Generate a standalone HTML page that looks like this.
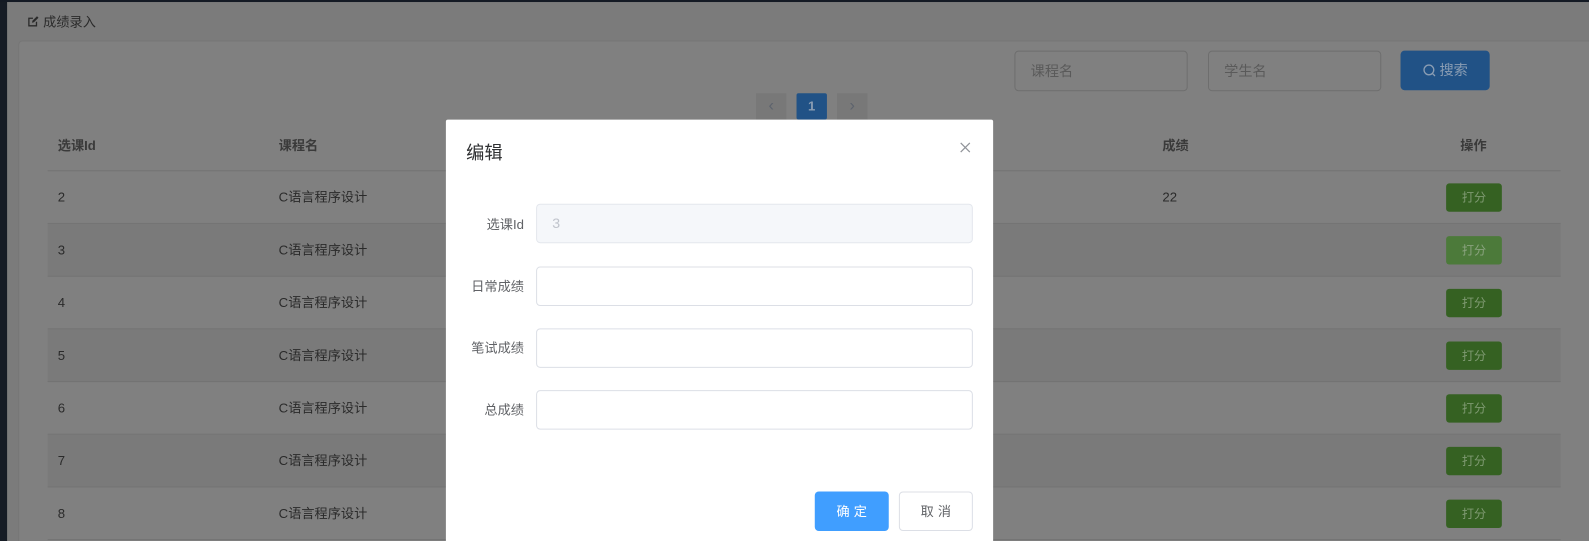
<!DOCTYPE html>
<html><head><meta charset="utf-8"><style>
*{box-sizing:border-box;margin:0;padding:0}
html,body{width:1589px;height:541px;overflow:hidden;background:#7b7b7b}
body{font-family:"Liberation Sans","Noto Sans CJK SC",sans-serif;font-size:13px;color:#333;position:relative}
#w{position:absolute;left:0;top:0;width:1568px;height:534px;transform:scale(1.0134);transform-origin:0 0}
.abs{position:absolute}
.topbar{left:0;top:0;width:1568px;height:2px;background:#141a24}
.side{left:0;top:0;width:7px;height:534px;background:#161c25}
.title{left:27px;top:14px;font-size:13px;color:#2a2a2a;line-height:16px}
.card{left:18px;top:40px;width:1570px;height:520px;background:#808080;border:1px solid #767676;border-radius:4px}
.inp{height:40px;border:1px solid #6e6e6e;border-radius:4px;color:#5a5a5a;font-size:14px;padding:0 15px;line-height:38px}
.btn{border-radius:4px;text-align:center}
.row{left:47px;width:1493px;height:52px;border-bottom:1px solid #737373}
.cell{position:absolute;font-size:13px;color:#2a2a2a;line-height:16px;top:18px}
.g{position:absolute;left:1380px;width:55px;height:28px;background:#356122;border-radius:3px;color:#7f9a72;font-size:12px;text-align:center;line-height:28px;top:12px}
.dlg{left:440px;top:118px;width:540px;height:430px;background:#fff;border-radius:2px}
.lab{position:absolute;left:0;font-size:13px;color:#606266;width:77px;text-align:right;line-height:16px}
.fi{position:absolute;left:89px;width:431px;height:39px;border:1px solid #dcdfe6;border-radius:4px;background:#fff}
</style></head><body><div id="w">
<div class="abs side"></div>
<div class="abs topbar"></div>
<div class="abs title"><svg width="12" height="12" viewBox="0 0 12 12" style="vertical-align:-1px"><path d="M9 6.5V10.5H1.5V3H5.5" fill="none" stroke="#2a2a2a" stroke-width="1.3"/><path d="M4.5 7.5L5 5.5L9.5 1L11 2.5L6.5 7Z" fill="#2a2a2a"/></svg> 成绩录入</div>
<div class="abs card"></div>
<div class="abs inp" style="left:1001px;top:50px;width:171px">课程名</div>
<div class="abs inp" style="left:1192px;top:50px;width:171px">学生名</div>
<div class="abs btn" style="left:1382px;top:50px;width:88px;height:39px;background:#215286;color:#8a9db3;font-size:14px;line-height:39px"><svg width="13" height="13" viewBox="0 0 13 13" style="vertical-align:-2px"><circle cx="6" cy="6" r="4.8" fill="none" stroke="#8a9db3" stroke-width="1.3"/><path d="M9.5 9.5L12 12" stroke="#8a9db3" stroke-width="1.3"/></svg> 搜索</div>
<div class="abs" style="left:746px;top:92px;width:30px;height:26px;background:#787878;color:#5d636d;text-align:center;line-height:26px;font-size:16px">‹</div>
<div class="abs" style="left:786px;top:92px;width:30px;height:26px;background:#215286;color:#8a9db3;text-align:center;line-height:26px;font-weight:bold;border-radius:2px">1</div>
<div class="abs" style="left:826px;top:92px;width:30px;height:26px;background:#787878;color:#5d636d;text-align:center;line-height:26px;font-size:16px">›</div>

<div class="abs row" style="top:117px;height:52px"><span class="cell" style="left:10px;top:19px;font-weight:bold;color:#3a3a3a">选课Id</span><span class="cell" style="left:228px;top:19px;font-weight:bold;color:#3a3a3a">课程名</span><span class="cell" style="left:1100px;top:19px;font-weight:bold;color:#3a3a3a">成绩</span><span class="cell" style="left:1394px;top:19px;font-weight:bold;color:#3a3a3a">操作</span></div>
<div class="abs row" style="top:169px"><span class="cell" style="left:10px">2</span><span class="cell" style="left:228px">C语言程序设计</span><span class="cell" style="left:1100px">22</span><div class="g">打分</div></div>
<div class="abs row" style="top:221px;background:#7a7a7a"><span class="cell" style="left:10px">3</span><span class="cell" style="left:228px">C语言程序设计</span><div class="g" style="background:#4c7a3a;color:#8aa37f">打分</div></div>
<div class="abs row" style="top:273px"><span class="cell" style="left:10px">4</span><span class="cell" style="left:228px">C语言程序设计</span><div class="g">打分</div></div>
<div class="abs row" style="top:325px;background:#7a7a7a"><span class="cell" style="left:10px">5</span><span class="cell" style="left:228px">C语言程序设计</span><div class="g">打分</div></div>
<div class="abs row" style="top:377px"><span class="cell" style="left:10px">6</span><span class="cell" style="left:228px">C语言程序设计</span><div class="g">打分</div></div>
<div class="abs row" style="top:429px;background:#7a7a7a"><span class="cell" style="left:10px">7</span><span class="cell" style="left:228px">C语言程序设计</span><div class="g">打分</div></div>
<div class="abs row" style="top:481px"><span class="cell" style="left:10px">8</span><span class="cell" style="left:228px">C语言程序设计</span><div class="g">打分</div></div>

<div class="abs dlg">
<div style="position:absolute;left:20px;top:21px;font-size:18px;color:#303133;line-height:24px">编辑</div>
<svg style="position:absolute;left:507px;top:22px" width="11" height="11" viewBox="0 0 11 11"><path d="M1 1L10 10M10 1L1 10" stroke="#909399" stroke-width="1.2"/></svg>
<div class="lab" style="top:96px">选课Id</div>
<div class="fi" style="top:83px;background:#f5f7fa;border-color:#e4e7ed;color:#c0c4cc;font-size:14px;padding:0 15px;line-height:37px">3</div>
<div class="lab" style="top:157px">日常成绩</div>
<div class="fi" style="top:145px"></div>
<div class="lab" style="top:218px">笔试成绩</div>
<div class="fi" style="top:206px"></div>
<div class="lab" style="top:279px">总成绩</div>
<div class="fi" style="top:267px"></div>
<div class="btn" style="position:absolute;left:364px;top:367px;width:73px;height:39px;background:#409eff;color:#fff;line-height:39px;letter-spacing:4px;text-indent:4px">确定</div>
<div class="btn" style="position:absolute;left:447px;top:367px;width:73px;height:39px;border:1px solid #dcdfe6;color:#606266;line-height:37px;letter-spacing:4px;text-indent:4px">取消</div>
</div>
</div></body></html>
